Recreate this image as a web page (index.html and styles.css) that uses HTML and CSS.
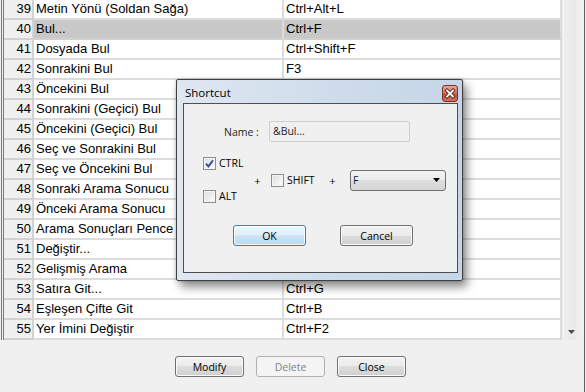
FILE: index.html
```html
<!DOCTYPE html>
<html lang="tr">
<head>
<meta charset="utf-8">
<title>Shortcut Mapper</title>
<link rel="stylesheet" href="styles.css">
</head>
<body>
<div class="window">
  <div class="grid">
    <div class="rows">
      <div class="row"><div class="num">39</div><div class="name">Metin Yönü (Soldan Sağa)</div><div class="key">Ctrl+Alt+L</div></div>
      <div class="row sel"><div class="num">40</div><div class="name">Bul...</div><div class="key">Ctrl+F</div></div>
      <div class="row"><div class="num">41</div><div class="name">Dosyada Bul</div><div class="key">Ctrl+Shift+F</div></div>
      <div class="row"><div class="num">42</div><div class="name">Sonrakini Bul</div><div class="key">F3</div></div>
      <div class="row"><div class="num">43</div><div class="name">Öncekini Bul</div><div class="key"></div></div>
      <div class="row"><div class="num">44</div><div class="name">Sonrakini (Geçici) Bul</div><div class="key"></div></div>
      <div class="row"><div class="num">45</div><div class="name">Öncekini (Geçici) Bul</div><div class="key"></div></div>
      <div class="row"><div class="num">46</div><div class="name">Seç ve Sonrakini Bul</div><div class="key"></div></div>
      <div class="row"><div class="num">47</div><div class="name">Seç ve Öncekini Bul</div><div class="key"></div></div>
      <div class="row"><div class="num">48</div><div class="name">Sonraki Arama Sonucu</div><div class="key"></div></div>
      <div class="row"><div class="num">49</div><div class="name">Önceki Arama Sonucu</div><div class="key"></div></div>
      <div class="row"><div class="num">50</div><div class="name">Arama Sonuçları Pence</div><div class="key"></div></div>
      <div class="row"><div class="num">51</div><div class="name">Değiştir...</div><div class="key"></div></div>
      <div class="row"><div class="num">52</div><div class="name">Gelişmiş Arama</div><div class="key"></div></div>
      <div class="row"><div class="num">53</div><div class="name">Satıra Git...</div><div class="key">Ctrl+G</div></div>
      <div class="row"><div class="num">54</div><div class="name">Eşleşen Çifte Git</div><div class="key">Ctrl+B</div></div>
      <div class="row"><div class="num">55</div><div class="name">Yer İmini Değiştir</div><div class="key">Ctrl+F2</div></div>
    </div>
    <div class="vscroll">
      <div class="sb-down">
        <svg width="7" height="4" viewBox="0 0 7 4"><polygon points="0,0 7,0 3.5,4" fill="#4d4d4d"/></svg>
      </div>
    </div>
  </div>
  <div class="btns">
    <button class="btn">Modify</button>
    <button class="btn disabled">Delete</button>
    <button class="btn">Close</button>
  </div>
</div>

<div class="dialog">
  <div class="titlebar">
    <span class="title">Shortcut</span>
    <span class="close-x">
      <svg width="14" height="15" viewBox="0 0 14 15">
        <path d="M4 4.5 L10 10.5 M10 4.5 L4 10.5" stroke="#5a2418" stroke-width="3.6" stroke-linecap="square"/>
        <path d="M4 4.5 L10 10.5 M10 4.5 L4 10.5" stroke="#ffffff" stroke-width="1.8" stroke-linecap="square"/>
      </svg>
    </span>
  </div>
  <div class="client">
    <div class="name-row">
      <span class="name-label">Name :</span>
      <div class="name-input">&amp;Bul...</div>
    </div>
    <div class="mods">
      <div class="col-left">
        <label class="chk-item"><span class="chk checked"><svg width="11" height="11" viewBox="0 0 11 11"><path d="M2 5.6 L4.4 8.4 L9 2.4" fill="none" stroke="#3a4f8f" stroke-width="1.9"/></svg></span><span class="chk-text">CTRL</span></label>
        <label class="chk-item"><span class="chk"></span><span class="chk-text">ALT</span></label>
      </div>
      <span class="plus">+</span>
      <label class="chk-item shift"><span class="chk"></span><span class="chk-text">SHIFT</span></label>
      <span class="plus">+</span>
      <div class="combo">
        <span class="combo-text">F</span>
        <svg width="7" height="4" viewBox="0 0 7 4"><polygon points="0,0 7,0 3.5,4" fill="#000"/></svg>
      </div>
    </div>
    <div class="dlg-btns">
      <button class="btn default">OK</button>
      <button class="btn">Cancel</button>
    </div>
  </div>
</div>
</body>
</html>
```
FILE: styles.css
```css
* { box-sizing: border-box; }
html, body { margin: 0; padding: 0; }
body {
  width: 586px;
  height: 392px;
  overflow: hidden;
  background: #f0f0f0;
  font-family: "Liberation Sans", Arial, sans-serif;
  position: relative;
}

.window {
  width: 585px;
  height: 392px;
  border-right: 1px solid #5f5f5f;
  display: flex;
  flex-direction: column;
}

.grid {
  display: flex;
  margin-left: 1px;
  width: 578px;
  height: 340px;
  border-left: 3px double #7a7a7a;
}

.rows {
  width: 558px;
  background: #fff;
}

.row {
  display: flex;
  height: 20px;
  font-size: 13px;
  line-height: 18px;
  color: #000;
}

.num {
  width: 30px;
  background: #f0f0f0;
  border-right: 2px solid #d2d2d2;
  border-bottom: 2px solid #d2d2d2;
  text-align: right;
  padding-right: 1px;
}

.name, .key {
  border-right: 2px solid #dcdcdc;
  border-bottom: 2px solid #dcdcdc;
  padding-left: 2px;
  white-space: nowrap;
  overflow: hidden;
}
.name { width: 250px; }
.key { width: 278px; }

.row.sel .name, .row.sel .key {
  background: #c8c8c8;
  border-bottom-color: #d0d0d0;
}

.vscroll {
  width: 17px;
  height: 340px;
  background: linear-gradient(90deg, #e2e2e2 0, #f6f6f6 1px, #ededed 3px, #e9e9e9 13px, #f3f3f3 16px, #e2e2e2 17px);
  display: flex;
  flex-direction: column;
  justify-content: flex-end;
}
.sb-down {
  height: 17px;
  display: flex;
  align-items: center;
  justify-content: center;
  padding-left: 1px;
}

.btns {
  display: flex;
  gap: 12px;
  padding-top: 16px;
  padding-left: 175px;
}

.btn {
  width: 69px;
  height: 21px;
  padding: 0;
  font-family: "Open Sans", "Noto Sans", sans-serif;
  font-size: 10.5px;
  color: #000;
  border: 1px solid #707070;
  border-radius: 3px;
  background: linear-gradient(#f2f2f2, #ebebeb 50%, #dddddd 50%, #cfcfcf);
  box-shadow: inset 0 0 0 1px #fbfbfb;
}
.btn.disabled {
  border-color: #adb2b5;
  background: #f4f4f4;
  color: #838383;
  box-shadow: none;
}
.btn.default {
  border-color: #3c7fb1;
  background: linear-gradient(#eef7fd, #dfeffa 48%, #c8e3f5 52%, #bcdcf1);
  box-shadow: inset 0 0 0 1px rgba(255,255,255,0.75);
}

/* dialog */
.dialog {
  position: absolute;
  left: 176px;
  top: 79px;
  width: 287px;
  height: 202px;
  border: 1px solid #3f3f3f;
  border-radius: 2px;
  padding: 0 4px 7px 6px;
  background: linear-gradient(90deg, #dfe7f1, #cddbeb 60%, #c6d6e8);
  box-shadow: 4px 6px 10px rgba(0,0,0,0.45), 0 0 3px rgba(0,0,0,0.25);
  font-family: "Open Sans", "Noto Sans", sans-serif;
}
.titlebar {
  height: 23px;
  position: relative;
  display: flex;
  align-items: center;
  padding-left: 2px;
}
.title {
  font-size: 11.5px;
  color: #000;
  padding-top: 2px;
}
.close-x {
  position: absolute;
  right: 0;
  top: 5px;
  width: 16px;
  height: 17px;
  border: 1px solid #7c3226;
  border-radius: 3px;
  background: linear-gradient(#e6a595, #d47a66 45%, #c2503a 55%, #d0735c);
  display: flex;
  align-items: center;
  justify-content: center;
}

.client {
  height: 170px;
  border: 1px solid #4e4e4e;
  background: #f0f0f0;
  font-size: 10.5px;
  color: #000;
}

.name-row {
  display: flex;
  align-items: center;
  margin-top: 17px;
  height: 21px;
}
.name-label {
  margin-left: 40px;
  width: 45px;
  color: #1e1e1e;
}
.name-input {
  width: 141px;
  height: 21px;
  border: 1px solid #cfcfcf;
  border-radius: 2px;
  background: #f0f0f0;
  padding-left: 3px;
  line-height: 18px;
  color: #1e1e1e;
}

.mods {
  display: flex;
  align-items: center;
  margin-top: 15px;
  padding-left: 19px;
}
.col-left {
  width: 51px;
  display: flex;
  flex-direction: column;
  gap: 20px;
}
.chk-item {
  display: flex;
  align-items: center;
  height: 13px;
}
.chk {
  width: 13px;
  height: 13px;
  border: 1px solid #8e8f8f;
  background: linear-gradient(135deg, #dcdcdc, #f4f4f4 70%, #ffffff);
  box-shadow: inset 0 0 0 1px #f4f4f4;
  display: flex;
  align-items: center;
  justify-content: center;
  flex: none;
}
.chk-text {
  margin-left: 3px;
  line-height: 13px;
}
.plus {
  width: 7px;
  text-align: center;
  font-size: 11px;
}
.shift {
  width: 58px;
  margin-left: 10px;
}
.combo {
  margin-left: 14px;
  width: 96px;
  height: 21px;
  border: 1px solid #707070;
  border-radius: 3px;
  background: linear-gradient(#f3f3f3, #ebebeb 50%, #dedede 50%, #d6d6d6);
  display: flex;
  align-items: center;
  justify-content: space-between;
  padding: 0 5px 0 2px;
}
.combo-text { color: #0a1a4a; }

.dlg-btns {
  display: flex;
  gap: 34px;
  margin-top: 22px;
  padding-left: 49px;
}
.dlg-btns .btn { width: 73px; }
```
